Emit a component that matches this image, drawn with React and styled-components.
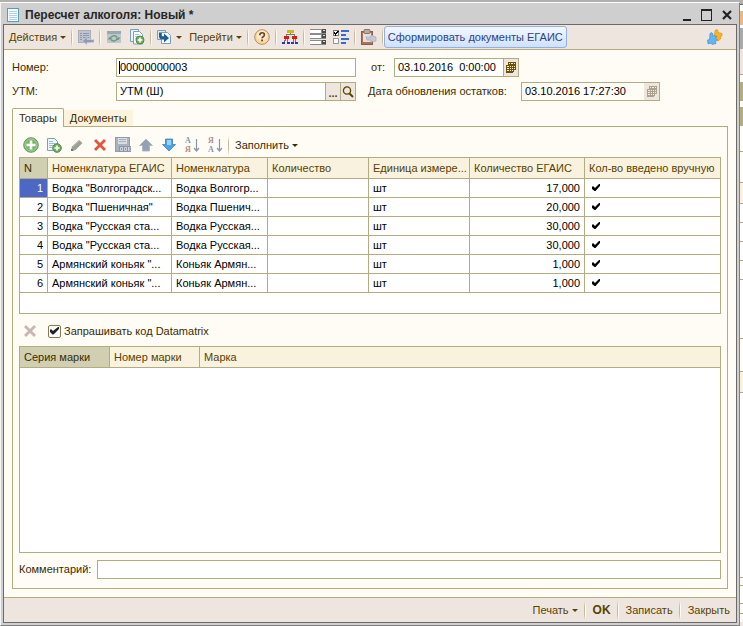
import React, { useState } from "react";
import styled, { createGlobalStyle, css } from "styled-components";

const line = "#b3ac80";
const brown = "#594300";

const goods = [
  { name: 'Водка "Волгоградск...', item: "Водка Волгогр...", unit: "шт", qty: "17,000" },
  { name: 'Водка "Пшеничная"', item: "Водка Пшенич...", unit: "шт", qty: "20,000" },
  { name: 'Водка "Русская ста...', item: "Водка Русская...", unit: "шт", qty: "30,000" },
  { name: 'Водка "Русская ста...', item: "Водка Русская...", unit: "шт", qty: "30,000" },
  { name: 'Армянский коньяк "...', item: "Коньяк Армян...", unit: "шт", qty: "1,000" },
  { name: 'Армянский коньяк "...', item: "Коньяк Армян...", unit: "шт", qty: "1,000" },
];

/* ---------- icons ---------- */

const Icon = ({ children, ...rest }) => (
  <svg width="16" height="16" viewBox="0 0 16 16" aria-hidden="true" {...rest}>
    {children}
  </svg>
);

const PlusBadge = ({ cx = 11, cy = 11, r = 4.5 }) => (
  <g>
    <circle cx={cx} cy={cy} r={r} fill="#6fae5f" stroke="#4f8a4a" />
    <path
      d={`M${cx - r * 0.6} ${cy}h${r * 1.2}M${cx} ${cy - r * 0.6}v${r * 1.2}`}
      stroke="#fff"
      strokeWidth={r * 0.4}
    />
  </g>
);

const FormIcon = () => (
  <Icon>
    <rect x="2.5" y="1.5" width="11" height="13" fill="#f3fafd" stroke="#5f9bb5" />
    <path d="M4 4.5h8M4 6.5h8M4 8.5h8M4 10.5h8M4 12.5h8" stroke="#b4d3e2" />
  </Icon>
);

const SaveCloseIcon = () => (
  <Icon>
    <rect x=".5" y="1.5" width="12" height="12" fill="#c0c4cc" stroke="#a9afba" />
    <path d="M2 4.5h2M5 4.5h6M2 6.5h2M5 6.5h6M2 8.5h2M5 8.5h6M2 10.5h2" stroke="#8d99ae" />
    <path d="M4.5 12l4.500-4v2.500h7v3h-7V16z" fill="#8d9cb5" stroke="#dcdcdf" strokeWidth=".5" />
  </Icon>
);

const RefreshIcon = () => (
  <Icon>
    <rect x="1" y="2" width="14" height="12" fill="#c0c7cc" />
    <rect x="1" y="2" width="14" height="3" fill="#98a8b5" />
    <path d="M5 8.500a3.500 3 0 0 1 6-.5M11 10a3.500 3 0 0 1-6 .8" fill="none" stroke="#6a9a7a" strokeWidth="1.5" />
    <path d="M9.500 8.500h5l-2.500 3zM1.500 10.500h5L4 7.500z" fill="#6a9a7a" />
  </Icon>
);

const CopyIcon = () => (
  <Icon>
    <path d="M1.500 .5h8v12h-8z" fill="#eaf3f8" stroke="#7ba0b5" />
    <path d="M4.500 2.500h6l3 3v9.500h-9z" fill="#f6fbfd" stroke="#7ba0b5" />
    <path d="M6 5.500h4M6 7.500h6M6 9.500h3" stroke="#a9c6d6" />
    <PlusBadge cx={11} cy={11} r={4} />
  </Icon>
);

const GotoIcon = () => (
  <Icon>
    <path d="M.5 1.500h8v9h-8z" fill="#dfeaf0" stroke="#7ba0b5" />
    <path d="M4.500 3.500h6l3 3v8h-9z" fill="#f6fbfd" stroke="#7ba0b5" />
    <path d="M2 3.500h2.500v3q0 .8 1 .8H7V4.500L12 9l-5 4.500v-3H5.500Q2 10.500 2 7z" fill="#1f5f92" />
  </Icon>
);

const HelpIcon = () => (
  <Icon>
    <circle cx="8" cy="8" r="7.300" fill="#fbd9a2" stroke="#b58a62" />
    <circle cx="8" cy="6.500" r="5" fill="#fdeacb" />
    <path d="M5.800 6.200q0-2.400 2.300-2.400t2.300 2q0 1.200-1.200 1.900t-1.100 1.700" fill="none" stroke="#6b4323" strokeWidth="1.600" />
    <rect x="7.200" y="10.500" width="1.800" height="1.800" fill="#6b4323" />
  </Icon>
);

const TreeIcon = () => (
  <Icon shapeRendering="crispEdges">
    <path d="M8.500 4v2M4.500 7V5.500h8V7M4 10l-2 3M5 10l1 3M12 10l-1 3M13 10l1 3" stroke="#777" fill="none" />
    <rect x="5" y="1" width="7" height="3" fill="#c9bb10" />
    <rect x="2" y="7" width="5" height="3" fill="#e01818" />
    <rect x="10" y="7" width="5" height="3" fill="#e01818" />
    <path d="M0 13h3v2H0zM5 13h3v2H5zM9 13h3v2H9zM13 13h3v2h-3z" fill="#2038c8" />
  </Icon>
);

const ListIcon = () => (
  <Icon shapeRendering="crispEdges">
    {[0, 5, 11].map((y) => (
      <g key={y}>
        <rect x="0" y={y} width="16" height="5" fill="#8a8b8d" />
        <rect x="0" y={y + 1} width="11" height="3" fill="#fff" />
        <rect x="12" y={y} width="4" height="4" fill="#4c4c4c" />
        <rect x="13" y={y + 1} width="2" height="1" fill="#ddd" />
      </g>
    ))}
  </Icon>
);

const ChecklistIcon = () => (
  <Icon shapeRendering="crispEdges">
    <rect x=".5" y="1.500" width="5" height="5" fill="#fff" stroke="#777" />
    <rect x=".5" y="9.500" width="5" height="5" fill="#fff" stroke="#999" />
    <path d="M1 3.500l1.500 2L5 2" fill="none" stroke="#000" strokeWidth="1.500" />
    <path d="M8 1h8v2H8zM8 5h5v2H8zM8 9h8v2H8zM8 13h5v2H8z" fill="#2f6fd0" />
  </Icon>
);

const ClipboardIcon = () => (
  <Icon>
    <rect x=".5" y="2.500" width="11" height="13" fill="#a8745a" stroke="#8d5c45" />
    <rect x="2" y="4" width="8" height="9" fill="#e9dfd8" />
    <rect x="3" y=".5" width="6" height="4" rx="1" fill="#b9aca0" stroke="#84766b" />
    <path d="M5 8h5V6l5 2v4l-5 1v-2H6z" fill="#c6c9d2" stroke="#a7abb8" strokeWidth=".7" />
  </Icon>
);

const PiecesIcon = () => (
  <Icon>
    <path d="M8 1.500q2-2 3 0v2l4 1v2.500l-2 .5 1 2-3 2.500-4-2z" fill="#fbb41c" stroke="#d88916" strokeWidth=".6" />
    <path d="M3 4.500q2-2 3 .5l-.5 1.500 4 .5-.5 2.500 1.500 1.500-2 1.500.5 2-4 1-1-1.500-3 1-.5-4 2-.5z" fill="#62b4f2" stroke="#3a87cc" strokeWidth=".6" />
  </Icon>
);

const AddIcon = () => (
  <Icon>
    <circle cx="8" cy="8" r="7.300" fill="#7db56d" stroke="#6b9a68" />
    <circle cx="8" cy="8" r="6" fill="none" stroke="#a5cf97" />
    <path d="M8 3.500v9M3.500 8h9" stroke="#fff" strokeWidth="2.600" />
  </Icon>
);

const AddCopyIcon = () => (
  <Icon>
    <path d="M1.500 1.500h7l3 3v9h-10z" fill="#eef6fa" stroke="#7ba0b5" />
    <path d="M3 4.500h4M3 6.500h6M3 8.500h5M3 10.500h3" stroke="#9dbccd" />
    <PlusBadge cx={11} cy={11} r={4.300} />
  </Icon>
);

const PencilIcon = () => (
  <Icon>
    <path d="M2 14l1-4.500 7-6.500 3.500 3-7 7z" fill="#9aa092" />
    <path d="M2 14l.6-2.600 2 2z" fill="#5c6159" />
    <path d="M4 9.500l6.500-6" stroke="#bcc1b4" />
  </Icon>
);

const CrossIcon = ({ color = "#e2553f" }) => (
  <Icon>
    <path d="M2 4l2-2 4 4 4-4 2 2-4 4 4 4-2 2-4-4-4 4-2-2 4-4z" fill={color} />
  </Icon>
);

const DiskIcon = () => (
  <Icon>
    <rect x=".5" y=".5" width="14" height="14" fill="#a9b3c0" stroke="#929dac" />
    <rect x="3" y="1" width="9" height="6" fill="#d9dde2" />
    <path d="M4 2.500h7M4 4.500h7" stroke="#a9b3c0" />
    <rect x="4" y="9" width="12" height="6" fill="#8c96a4" />
    <path d="M5.500 10.500h2v3h-2zM9.500 10.500h2v3h-2zM13.500 10v4M15.500 10l-2 2 2 2" fill="none" stroke="#dfe2e7" strokeWidth=".8" />
  </Icon>
);

const ArrowIcon = ({ down }) => (
  <Icon>
    <path
      d={down ? "M4.500 2h7v5.500h3L8 14 1.500 7.500h3z" : "M4.500 14h7V8.500h3L8 2 1.500 8.500h3z"}
      fill={down ? "#4fa3e6" : "#94a1b1"}
      stroke={down ? "#3b7fb8" : "#a9b2be"}
      strokeWidth=".8"
    />
    {down && <path d="M6 3h4v5H6z" fill="#9ad4f8" />}
  </Icon>
);

const SortIcon = ({ desc }) => (
  <Icon>
    <g fontFamily="Liberation Serif, serif" fontSize="8" fontWeight="bold">
      <text x="1" y="6" fill={desc ? "#b58c8c" : "#8797a8"}>{desc ? "Я" : "А"}</text>
      <text x="1" y="15" fill={desc ? "#8797a8" : "#b58c8c"}>{desc ? "А" : "Я"}</text>
    </g>
    <path d="M12.500 2v12M10 11l2.500 3 2.500-3" fill="none" stroke="#8797a8" strokeWidth="1.200" />
  </Icon>
);

const CalendarIcon = ({ color = "#6b5200" }) => (
  <svg width="10" height="11" viewBox="0 0 10 11" shapeRendering="crispEdges" aria-hidden="true">
    <path d="M2 0h8v8H8v2H7v1H0V3h2z" fill={color} />
    <path d="M3 1h1v1H3zM5 1h2v1H5zM8 1h1v1H8zM1 4h2v1H1zM4 4h1v1H4zM6 4h1v1H6zM8 4h1v1H8zM1 6h2v1H1zM4 6h1v1H4zM6 6h1v1H6zM8 6h1v1H8zM1 8h2v1H1zM4 8h1v1H4zM6 8h1v1H6z" fill="#f4eedf" />
  </svg>
);

const SearchIcon = () => (
  <svg width="12" height="12" viewBox="0 0 12 12" aria-hidden="true">
    <circle cx="5" cy="4.500" r="3.600" fill="none" stroke={brown} strokeWidth="1.300" />
    <path d="M7.500 7.500l3.500 3.500" stroke={brown} strokeWidth="2" />
  </svg>
);

const CheckMark = () => (
  <svg width="8" height="8" viewBox="0 0 8 8" role="img" aria-label="Да">
    <path d="M0 3l1-1 2 2 4-4h1v2L3.500 7h-1L0 5z" fill="#000" />
  </svg>
);

const MinimizeIcon = () => (
  <Icon width="12" height="12" viewBox="0 0 12 12" shapeRendering="crispEdges">
    <path d="M2 10h8v2H2z" fill="#222" />
  </Icon>
);

const MaximizeIcon = () => (
  <Icon width="12" height="12" viewBox="0 0 12 12" shapeRendering="crispEdges">
    <path d="M.5 1v10.500h10V1z" fill="none" stroke="#222" />
    <path d="M0 0h11v2H0z" fill="#222" />
  </Icon>
);

const CloseIcon = () => (
  <Icon width="12" height="12" viewBox="0 0 12 12">
    <path d="M2 2l8 8M10 2l-8 8" stroke="#222" strokeWidth="2.200" />
  </Icon>
);

/* ---------- page ---------- */

const App = () => {
  const [askCode, setAskCode] = useState(true);

  return (
    <Desktop>
      <GlobalStyle />
      <Window>
        <TitleBar>
          <FormIcon />
          <h1>Пересчет алкоголя: Новый *</h1>
          <WindowButtons>
            <ToolButton aria-label="Свернуть"><MinimizeIcon /></ToolButton>
            <ToolButton aria-label="Развернуть"><MaximizeIcon /></ToolButton>
            <ToolButton aria-label="Закрыть окно"><CloseIcon /></ToolButton>
          </WindowButtons>
        </TitleBar>

        <Frame>
          <Toolbar>
            <ToolButton>Действия<Caret /></ToolButton>
            <Separator />
            <ToolButton aria-label="Записать и закрыть"><SaveCloseIcon /></ToolButton>
            <Separator />
            <ToolGroup>
              <ToolButton aria-label="Перечитать"><RefreshIcon /></ToolButton>
              <ToolButton aria-label="Скопировать"><CopyIcon /></ToolButton>
            </ToolGroup>
            <Separator />
            <ToolGroup>
              <ToolButton aria-label="Ввести на основании"><GotoIcon /><Caret /></ToolButton>
              <ToolButton>Перейти<Caret /></ToolButton>
            </ToolGroup>
            <Separator />
            <ToolButton aria-label="Справка"><HelpIcon /></ToolButton>
            <Separator />
            <ToolButton aria-label="Структура подчиненности"><TreeIcon /></ToolButton>
            <Separator />
            <ToolGroup>
              <ToolButton aria-label="Список"><ListIcon /></ToolButton>
              <ToolButton aria-label="Настройка списка"><ChecklistIcon /></ToolButton>
            </ToolGroup>
            <Separator />
            <ToolButton aria-label="Вставить"><ClipboardIcon /></ToolButton>
            <Separator $last />
            <AccentButton>Сформировать документы ЕГАИС</AccentButton>
            <ToolEnd>
              <ToolButton aria-label="Обмен"><PiecesIcon /></ToolButton>
            </ToolEnd>
          </Toolbar>

          <Body>
            <FieldRow>
              <Label htmlFor="number" $width={104}>Номер:</Label>
              <Field $width={240} $active>
                <input id="number" defaultValue="00000000003" />
              </Field>
              <Label htmlFor="date" $width={38} $indent={15}>от:</Label>
              <Field $width={125}>
                <input id="date" defaultValue="03.10.2016  0:00:00" />
                <button aria-label="Календарь"><CalendarIcon /></button>
              </Field>
            </FieldRow>
            <FieldRow>
              <Label htmlFor="utm" $width={104}>УТМ:</Label>
              <Field $width={240}>
                <input id="utm" defaultValue="УТМ (Ш)" />
                <Dots aria-label="Выбрать">...</Dots>
                <button aria-label="Открыть"><SearchIcon /></button>
              </Field>
              <Label htmlFor="updated" $width={165} $indent={12}>Дата обновления остатков:</Label>
              <Field $width={139} $readOnly>
                <input id="updated" readOnly defaultValue="03.10.2016 17:27:30" />
                <button aria-label="Календарь остатков" disabled><CalendarIcon color="#aaa18f" /></button>
              </Field>
            </FieldRow>

            <Tabs role="tablist">
              <Tab role="tab" aria-selected="true" $active>Товары</Tab>
              <Tab role="tab" aria-selected="false">Документы</Tab>
            </Tabs>

            <Panel>
              <PanelTools>
                <ToolButton aria-label="Добавить"><AddIcon /></ToolButton>
                <ToolButton aria-label="Добавить копированием"><AddCopyIcon /></ToolButton>
                <ToolButton aria-label="Изменить"><PencilIcon /></ToolButton>
                <ToolButton aria-label="Удалить"><CrossIcon /></ToolButton>
                <ToolButton aria-label="Закончить редактирование"><DiskIcon /></ToolButton>
                <ToolButton aria-label="Вверх"><ArrowIcon /></ToolButton>
                <ToolButton aria-label="Вниз"><ArrowIcon down /></ToolButton>
                <ToolButton aria-label="По возрастанию"><SortIcon /></ToolButton>
                <ToolButton aria-label="По убыванию"><SortIcon desc /></ToolButton>
                <Separator $tight />
                <ToolButton $dark>Заполнить<Caret /></ToolButton>
              </PanelTools>

              <TableBox>
                <Table>
                  <colgroup>
                    {[28, 124, 96, 101, 101, 115].map((w, i) => (
                      <Col key={i} $width={w} />
                    ))}
                    <col />
                  </colgroup>
                  <thead>
                    <tr>
                      <Th $active>N</Th>
                      <Th>Номенклатура ЕГАИС</Th>
                      <Th>Номенклатура</Th>
                      <Th>Количество</Th>
                      <Th>Единица измере...</Th>
                      <Th>Количество ЕГАИС</Th>
                      <Th>Кол-во введено вручную</Th>
                    </tr>
                  </thead>
                  <tbody>
                    {goods.map((row, i) => (
                      <tr key={i}>
                        <Td $right $selected={i === 0}>{i + 1}</Td>
                        <Td>{row.name}</Td>
                        <Td>{row.item}</Td>
                        <Td />
                        <Td>{row.unit}</Td>
                        <Td $right>{row.qty}</Td>
                        <Td><CheckMark /></Td>
                      </tr>
                    ))}
                  </tbody>
                </Table>
              </TableBox>

              <MarkTools>
                <ToolButton aria-label="Удалить марку" disabled><CrossIcon color="#c9b5b3" /></ToolButton>
                <CheckLabel>
                  <input
                    type="checkbox"
                    checked={askCode}
                    onChange={() => setAskCode(!askCode)}
                  />
                  Запрашивать код Datamatrix
                </CheckLabel>
              </MarkTools>

              <TableBox $grow>
                <Table>
                  <colgroup>
                    <Col $width={90} />
                    <Col $width={90} />
                    <col />
                  </colgroup>
                  <thead>
                    <tr>
                      <Th $active>Серия марки</Th>
                      <Th>Номер марки</Th>
                      <Th>Марка</Th>
                    </tr>
                  </thead>
                </Table>
              </TableBox>

              <CommentRow>
                <Label htmlFor="comment" $width={78}>Комментарий:</Label>
                <Field $grow>
                  <input id="comment" />
                </Field>
              </CommentRow>
            </Panel>
          </Body>

          <Footer>
            <ToolButton>Печать<Caret /></ToolButton>
            <Separator />
            <ToolButton $bold>OK</ToolButton>
            <Separator />
            <ToolButton>Записать</ToolButton>
            <Separator />
            <ToolButton>Закрыть</ToolButton>
          </Footer>
        </Frame>
      </Window>
      <Behind />
    </Desktop>
  );
};

export default App;

/* ---------- styles ---------- */

const GlobalStyle = createGlobalStyle`
  * {
    box-sizing: border-box;
  }
  body {
    margin: 0;
    background: #b0b0b0;
  }
  body, button, input {
    font: 11px/13px "Liberation Sans", Arial, sans-serif;
  }
  svg {
    display: block;
    flex: none;
  }
`;

const Desktop = styled.div`
  display: flex;
  min-height: 100vh;
  padding-top: 2px;
`;

const Window = styled.main`
  display: flex;
  flex: 1;
  flex-direction: column;
  min-width: 0;
  padding: 0 2px 2px;
  background: #cfcfcf;
  border: solid;
  border-width: 1px;
  border-color: #fff #808080 #808080 #f4f4f4;
`;

/* edge of the window that lies under this one */
const Behind = styled.div`
  width: 3px;
  background: linear-gradient(
    #b0b0b0 2px, #666 2px 3px, #fff 3px 9px, #e9b885 9px 23px, #fff 23px 26px,
    #a9a9a9 26px 47px, #eee6de 47px 72px, ${line} 72px 73px, #fffcf6 73px 80px,
    ${line} 80px 99px, #fffcf6 99px 105px, ${line} 105px 124px,
    #fffcf6 124px 149px, ${line} 149px 150px, #fffcf6 150px 180px,
    ${line} 180px 181px, #f8f2df 181px 201px, ${line} 201px 202px,
    #fff 202px 220px, ${line} 220px 221px, #fff 221px 239px,
    ${line} 239px 240px, #fff 240px 258px, ${line} 258px 259px,
    #fff 259px 277px, ${line} 277px 278px, #fff 278px 336px,
    ${line} 336px 337px, #fffcf6 337px 369px, ${line} 369px 370px,
    #f8f2df 370px 390px, ${line} 390px 391px, #fff 391px 575px,
    ${line} 575px 576px, #fffcf6 576px 583px, ${line} 583px 584px,
    #fff 584px 601px, ${line} 601px 602px, #fffcf6 602px 611px,
    ${line} 611px 612px, #fffcf6 612px 620px, #eee6de 620px
  );
`;

const TitleBar = styled.header`
  display: flex;
  align-items: center;
  height: 21px;
  padding: 2px 4px 0 2px;
  gap: 4px;

  h1 {
    margin: 0;
    font-size: 12px;
    line-height: 16px;
    color: #262626;
  }
`;

const WindowButtons = styled.div`
  display: flex;
  margin-left: auto;
  gap: 8px;
`;

const Frame = styled.div`
  display: flex;
  flex: 1;
  flex-direction: column;
  border: 1px solid #6c6a6a;
  background: #fffcf6;
`;

const Toolbar = styled.div`
  display: flex;
  align-items: center;
  height: 25px;
  padding: 0 5px;
  background: #eee6de;
  border-bottom: 1px solid ${line};
`;

const ToolGroup = styled.div`
  display: flex;
  gap: 7px;
`;

const ToolEnd = styled.div`
  margin-left: auto;
  padding-right: 8px;
`;

const ToolButton = styled.button`
  display: flex;
  align-items: center;
  padding: 0;
  border: 0;
  background: none;
  color: ${(p) => (p.$dark ? "#3a2c00" : brown)};
  font-weight: ${(p) => (p.$bold ? "bold" : "normal")};
  font-size: ${(p) => (p.$bold ? "12px" : "11px")};
  white-space: nowrap;
`;

const Caret = styled.i`
  margin-left: 3px;
  border: solid transparent;
  border-width: 3px 3px 0;
  border-top-color: currentColor;
`;

const Separator = styled.span`
  width: 2px;
  height: 19px;
  margin: 0 5px;
  background: linear-gradient(90deg, #c4bc98 1px, #fffdf5 1px);
  mask-image: linear-gradient(transparent, #000 30%, #000 70%, transparent);

  ${(p) => p.$tight && "margin: 0 -2px;"}
  ${(p) => p.$last && "margin-right: 0;"}
`;

const AccentButton = styled.button`
  height: 22px;
  padding: 0 3px;
  border: 1px solid #94aee8;
  border-radius: 3px;
  background: linear-gradient(#f3f8ff, #cfe1fb);
  color: #2c4386;
  white-space: nowrap;
`;

const Body = styled.div`
  display: flex;
  flex: 1;
  flex-direction: column;
  padding: 8px;
`;

const FieldRow = styled.div`
  display: flex;
  margin-bottom: 5px;
`;

const Label = styled.label`
  flex: none;
  width: ${(p) => p.$width}px;
  padding-left: ${(p) => p.$indent || 0}px;
  line-height: 19px;
  color: #3a2c00;
`;

const Field = styled.div`
  display: flex;
  flex: ${(p) => (p.$grow ? "1" : "none")};
  width: ${(p) => (p.$width ? `${p.$width}px` : "auto")};
  height: 19px;
  border: 1px solid ${line};
  background: ${(p) => (p.$readOnly ? "#fffcf6" : "#fff")};

  input {
    flex: 1;
    min-width: 0;
    padding: 0 3px;
    border: 0;
    outline: none;
    background: none;
    color: #000;
    ${(p) =>
      p.$active &&
      css`
        background: linear-gradient(#000, #000) 2px 2px / 1px 13px no-repeat;
      `}
  }

  button {
    display: flex;
    align-items: center;
    justify-content: center;
    width: 15px;
    padding: 0;
    border: 0;
    border-left: 1px solid ${(p) => (p.$readOnly ? "#eee6de" : line)};
    background: #eee6de;
  }
`;

const Dots = styled.button`
  padding-top: 3px !important;
  font-weight: bold;
  color: ${brown};
`;

const Tabs = styled.div`
  display: flex;
  align-items: flex-end;
  height: 19px;
  margin-top: 1px;
`;

const Tab = styled.button`
  height: 16px;
  padding: 0 6px;
  border: 0;
  background: #fbf3dc;
  color: #3a2c00;

  ${(p) =>
    p.$active &&
    css`
      z-index: 1;
      height: 19px;
      margin-bottom: -1px;
      border: 1px solid ${line};
      border-bottom: 0;
      border-radius: 2px 2px 0 0;
      background: #fffcf6;
    `}
`;

const Panel = styled.section`
  display: flex;
  flex: 1;
  flex-direction: column;
  padding: 0 6px 9px;
  border: 1px solid ${line};
`;

const PanelTools = styled.div`
  display: flex;
  align-items: center;
  height: 30px;
  padding: 6px 4px 0;
  gap: 7px;
`;

const TableBox = styled.div`
  flex: ${(p) => (p.$grow ? "1" : "none")};
  padding-bottom: 20px;
  border: 1px solid ${line};
  background: #fff;
`;

const Table = styled.table`
  width: 100%;
  table-layout: fixed;
  border-spacing: 0;
`;

const Col = styled.col`
  width: ${(p) => p.$width}px;
`;

const cell = css`
  padding: 0 4px;
  border: solid ${line};
  border-width: 0 1px 1px 0;
  overflow: hidden;
  white-space: nowrap;

  &:last-child {
    border-right: 0;
  }
`;

const Th = styled.th`
  ${cell}
  height: 21px;
  background: ${(p) => (p.$active ? "#d0cfb2" : "#f8f2df")};
  color: ${(p) => (p.$active ? "#3a2c00" : brown)};
  font-weight: normal;
  text-align: left;
`;

const Td = styled.td`
  ${cell}
  height: 19px;
  background: ${(p) => (p.$selected ? "#4d68c4" : "#fff")};
  color: ${(p) => (p.$selected ? "#fff" : "#000")};
  text-align: ${(p) => (p.$right ? "right" : "left")};

  svg {
    margin-left: 3px;
  }
`;

const MarkTools = styled.div`
  display: flex;
  align-items: center;
  height: 32px;
  padding: 2px 4px 0 3px;
  gap: 10px;
`;

const CheckLabel = styled.label`
  display: flex;
  align-items: center;
  gap: 3px;
  color: #3a2c00;

  input {
    appearance: none;
    width: 13px;
    height: 13px;
    margin: 0;
    border: 1px solid #857a50;
    border-radius: 2px;
    background: #fff;
  }
  input:checked {
    background: #fff
      url("data:image/svg+xml,%3Csvg xmlns='http://www.w3.org/2000/svg' width='9' height='8'%3E%3Cpath d='M0 3l1-1 2 2 5-4h1v2L3.500 7.500h-1L0 5z' fill='%23222'/%3E%3C/svg%3E")
      center no-repeat;
  }
`;

const CommentRow = styled.div`
  display: flex;
  margin-top: 7px;
`;

const Footer = styled.footer`
  display: flex;
  align-items: center;
  justify-content: flex-end;
  height: 25px;
  padding: 0 6px;
  background: #eee6de;
  border-top: 1px solid ${line};

  ${Separator} {
    margin: 0 7px 0 6px;
  }
`;
